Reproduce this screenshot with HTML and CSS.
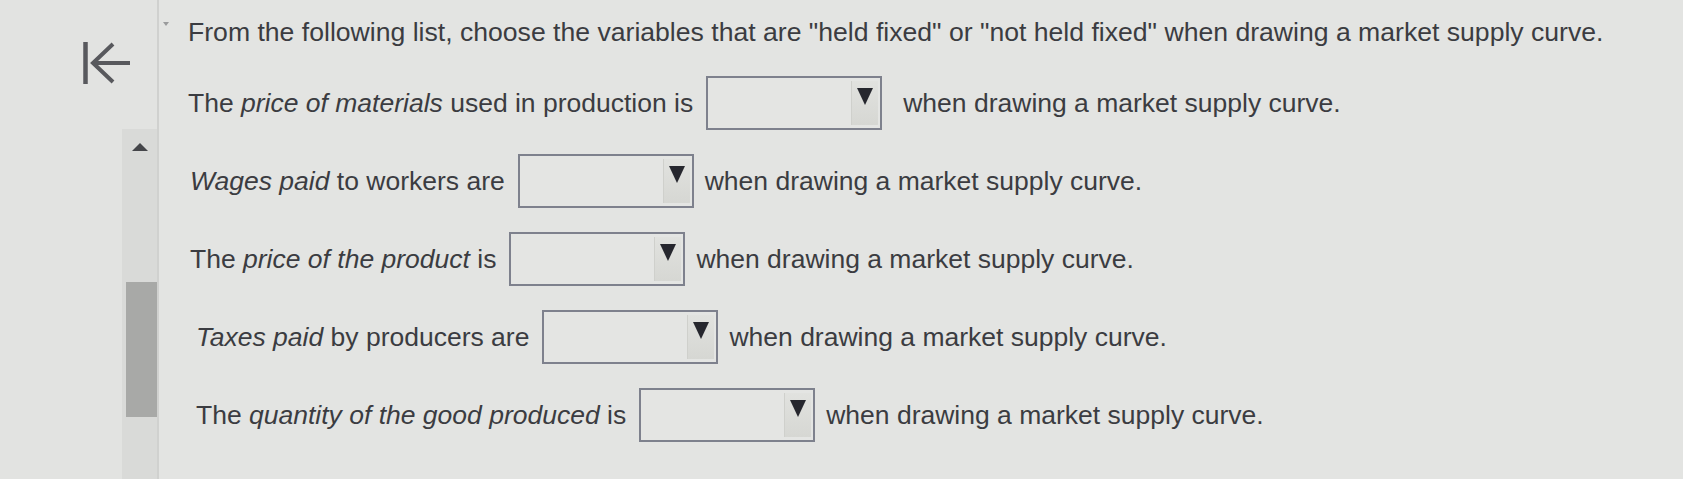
FILE: index.html
```html
<!DOCTYPE html>
<html>
<head>
<meta charset="utf-8">
<link rel="stylesheet" href="styles.css">
</head>
<body>
<div class="page">
  <aside class="side">
    <div class="side-main">
      <svg class="collapse-icon" width="48" height="42" viewBox="0 0 48 42">
        <line x1="2.5" y1="0" x2="2.5" y2="42" stroke="#58595d" stroke-width="4.5"/>
        <polyline points="30,2 10,21 30,40" fill="none" stroke="#58595d" stroke-width="4"/>
        <line x1="11" y1="21" x2="47" y2="21" stroke="#58595d" stroke-width="4"/>
      </svg>
    </div>
    <div class="scroll">
      <div class="scroll-track">
        <span class="scroll-up"></span>
        <div class="scroll-thumb"></div>
      </div>
    </div>
  </aside>
  <main class="content">
    <span class="mark"></span>
    <p class="title">From the following list, choose the variables that are "held fixed" or "not held fixed" when drawing a market supply curve.</p>
    <div class="row r1">
      <span>The <i>price of materials</i> used in production is</span>
      <div class="select"><span class="btn"><span class="tri"></span></span></div>
      <span>when drawing a market supply curve.</span>
    </div>
    <div class="row r2">
      <span><i>Wages paid</i> to workers are</span>
      <div class="select"><span class="btn"><span class="tri"></span></span></div>
      <span>when drawing a market supply curve.</span>
    </div>
    <div class="row r3">
      <span>The <i>price of the product</i> is</span>
      <div class="select"><span class="btn"><span class="tri"></span></span></div>
      <span>when drawing a market supply curve.</span>
    </div>
    <div class="row r4">
      <span><i>Taxes paid</i> by producers are</span>
      <div class="select"><span class="btn"><span class="tri"></span></span></div>
      <span>when drawing a market supply curve.</span>
    </div>
    <div class="row r5">
      <span>The <i>quantity of the good produced</i> is</span>
      <div class="select"><span class="btn"><span class="tri"></span></span></div>
      <span>when drawing a market supply curve.</span>
    </div>
  </main>
</div>
</body>
</html>
```

FILE: styles.css
```css
html, body {
  margin: 0;
  padding: 0;
  height: 100%;
  background: #e3e4e2;
}
.page {
  display: flex;
  height: 479px;
  overflow: hidden;
  font-family: "Liberation Sans", Arial, sans-serif;
  color: #3b3c41;
}
.side {
  width: 157px;
  flex: none;
  display: flex;
  border-right: 2px solid #d0d1cf;
  background: #e2e3e1;
}
.side-main {
  flex: 1;
  min-width: 0;
  padding: 42px 0 0 83px;
}
.collapse-icon { display: block; }
.scroll {
  width: 35px;
  flex: none;
  padding-top: 129px;
}
.scroll-track {
  height: 100%;
  background: #d9dad8;
  display: flex;
  flex-direction: column;
  align-items: flex-end;
}
.scroll-up {
  align-self: center;
  margin-top: 14px;
  width: 0;
  height: 0;
  border-left: 8px solid transparent;
  border-right: 8px solid transparent;
  border-bottom: 8px solid #45464a;
}
.scroll-thumb {
  margin-top: 131px;
  width: 31px;
  height: 135px;
  background: #a8a9a7;
}
.content {
  flex: 1;
  padding-left: 29px;
  position: relative;
}
.mark {
  position: absolute;
  left: 4px;
  top: 22px;
  width: 0;
  height: 0;
  border-left: 3px solid transparent;
  border-right: 3px solid transparent;
  border-top: 4px solid #9a9b9c;
}
.title {
  margin: 16px 0 0;
  font-size: 26.6px;
  line-height: 32px;
  white-space: nowrap;
}
.row {
  display: flex;
  align-items: center;
  height: 78px;
  font-size: 26.5px;
  white-space: nowrap;
}
.r1 { margin-top: 16px; }
.r2, .r3 { padding-left: 2px; }
.r4, .r5 { padding-left: 8px; }
.row i { font-style: italic; }
.select {
  width: 170px;
  height: 44px;
  border: 2px solid #7e818d;
  background: #e4e5e3;
  margin: 0 11px 0 13px;
  display: flex;
  justify-content: flex-end;
  padding: 3px 2px 3px 0;
  box-sizing: content-box;
}
.r1 .select { margin-right: 21px; }
.btn {
  width: 27px;
  height: 100%;
  background: linear-gradient(#e1e2df, #d6d7d3);
  border-left: 1px solid #cfd0cc;
  display: flex;
  justify-content: center;
  padding-top: 7px;
  box-sizing: border-box;
}
.tri {
  width: 0;
  height: 0;
  border-left: 8px solid transparent;
  border-right: 8px solid transparent;
  border-top: 17px solid #26272e;
}
```
